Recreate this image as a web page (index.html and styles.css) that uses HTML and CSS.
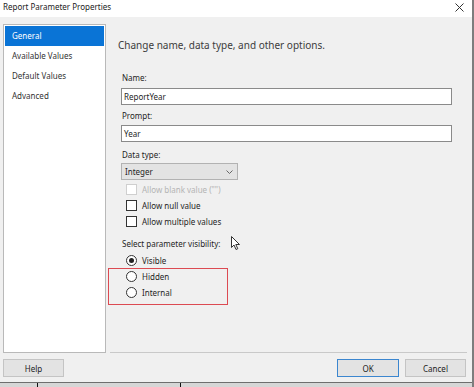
FILE: index.html
```html
<!DOCTYPE html>
<html>
<head>
  <title>Report Parameter Properties</title>
  <link rel="stylesheet" href="styles.css">
</head>
<body>
  <div class="window">
    <div class="titlebar">
      <span class="title">Report Parameter Properties</span>
      <svg class="close" width="9" height="9" viewBox="0 0 9 9">
        <path d="M0.5 0.5 L8.5 8.5 M8.5 0.5 L0.5 8.5" stroke="#333" stroke-width="1"/>
      </svg>
    </div>

    <div class="main">
      <ul class="nav">
        <li class="nav-item active">General</li>
        <li class="nav-item">Available Values</li>
        <li class="nav-item">Default Values</li>
        <li class="nav-item">Advanced</li>
      </ul>

      <div class="panel">
        <h2 class="heading">Change name, data type, and other options.</h2>

        <label class="field-label label-name">Name:</label>
        <div class="textbox tb-name">ReportYear</div>

        <label class="field-label label-prompt">Prompt:</label>
        <div class="textbox tb-prompt">Year</div>

        <label class="field-label label-type">Data type:</label>
        <div class="select">
          <span>Integer</span>
          <svg width="7" height="4" viewBox="0 0 7 4">
            <path d="M0.5 0.5 L3.5 3.5 L6.5 0.5" fill="none" stroke="#666" stroke-width="1"/>
          </svg>
        </div>

        <div class="checks">
          <div class="check disabled"><span class="box"></span>Allow blank value ("")</div>
          <div class="check"><span class="box"></span>Allow null value</div>
          <div class="check"><span class="box"></span>Allow multiple values</div>
        </div>

        <label class="field-label label-vis">Select parameter visibility:</label>
        <div class="radios">
          <div class="radio"><span class="dot checked"></span>Visible</div>
          <div class="radio"><span class="dot"></span>Hidden</div>
          <div class="radio"><span class="dot"></span>Internal</div>
        </div>

        <!-- annotation drawn over the dialog -->
        <div class="highlight"></div>
        <svg class="cursor" width="10" height="15" viewBox="0 0 10 15">
          <path d="M0.5 0.5 L0.5 11.5 L3 9 L5 13.5 L6.8 12.7 L4.8 8.5 L8.5 8.5 Z" fill="#fff" stroke="#333" stroke-width="1" stroke-linejoin="round"/>
        </svg>
      </div>
    </div>

    <div class="footer">
      <button class="btn">Help</button>
      <div class="footer-right">
        <button class="btn btn-default">OK</button>
        <button class="btn">Cancel</button>
      </div>
    </div>

    <div class="taskbar">
      <span class="tick tick-1"></span>
      <span class="tick tick-2"></span>
    </div>
  </div>
</body>
</html>
```

FILE: styles.css
```css
body {
  margin: 0;
  font-family: "Noto Sans", "Liberation Sans", sans-serif;
  font-size: 8px;
  color: #1e1e1e;
  background: #f0f0f0;
}
.window {
  width: 474px;
  height: 387px;
  overflow: hidden;
  display: flex;
  flex-direction: column;
  background: #f0f0f0;
  box-sizing: border-box;
  border-right: 2px solid #7d7d7d;
}
.titlebar {
  height: 17px;
  background: #fff;
  display: flex;
  justify-content: space-between;
  padding: 0 8px 0 3px;
  box-sizing: border-box;
}
.title {
  line-height: 14px;
  color: #222;
}
.close {
  margin-top: 3px;
}
.main {
  display: flex;
  gap: 4px;
  padding: 7px 5px 0 3px;
  height: 329px;
}
.nav {
  list-style: none;
  margin: 0;
  padding: 1px;
  width: 103px;
  height: 329px;
  box-sizing: border-box;
  background: #fff;
  border: 1px solid #b9b9b9;
}
.nav-item {
  height: 20px;
  line-height: 20px;
  padding-left: 7px;
  color: #333;
}
.nav-item.active {
  background: #0a74d6;
  color: #fff;
}
.panel {
  position: relative;
  flex: 1;
  height: 328px;
  border-bottom: 1px solid #c9c9c9;
  display: flex;
  flex-direction: column;
  align-items: flex-start;
  padding-left: 8px;
}
.heading {
  margin: 14px 0 0;
  font-size: 10px;
  font-weight: normal;
  line-height: 14px;
  color: #3c3c3c;
}
.field-label {
  display: block;
  line-height: 12px;
  margin-left: 4px;
}
.label-name { margin-top: 20px; }
.label-prompt { margin-top: 5px; }
.label-type { margin-top: 7px; }
.label-vis { margin-top: 9px; }
.textbox {
  margin: 4px 0 0 3px;
  width: 331px;
  height: 17px;
  box-sizing: border-box;
  border: 1px solid #8a8a8a;
  background: #fff;
  padding-left: 2px;
  line-height: 15px;
}
.tb-prompt { margin-top: 3px; }
.select {
  margin: 2px 0 0 3px;
  width: 117px;
  height: 17px;
  box-sizing: border-box;
  border: 1px solid #b2b2b2;
  background: #e3e3e3;
  display: flex;
  justify-content: space-between;
  align-items: center;
  padding: 0 4px 0 3px;
}
.checks, .radios {
  display: flex;
  flex-direction: column;
  margin-left: 8px;
}
.checks { margin-top: 1px; }
.radios { margin-top: 2px; }
.check, .radio {
  height: 16px;
  display: flex;
  align-items: center;
  gap: 5px;
}
.box {
  width: 9px;
  height: 9px;
  border: 1px solid #333;
  background: #fff;
}
.check.disabled {
  color: #b4b4b4;
}
.check.disabled .box {
  border-color: #cfcfcf;
}
.dot {
  width: 9px;
  height: 9px;
  border: 1px solid #333;
  border-radius: 50%;
  background: #fff;
  position: relative;
}
.dot.checked::after {
  content: "";
  position: absolute;
  left: 2px;
  top: 2px;
  width: 5px;
  height: 5px;
  border-radius: 50%;
  background: #222;
}
.highlight {
  position: absolute;
  left: -2px;
  top: 244px;
  width: 120px;
  height: 37px;
  box-sizing: border-box;
  border: 1.5px solid #dc4a52;
}
.cursor {
  position: absolute;
  left: 121px;
  top: 212px;
}
.footer {
  display: flex;
  justify-content: space-between;
  padding: 6px 6px 0 3px;
  height: 23px;
}
.footer-right {
  display: flex;
  gap: 6px;
}
.btn {
  width: 61px;
  height: 18px;
  box-sizing: border-box;
  border: 1px solid #c4c4c4;
  background: #e3e3e3;
  font-family: inherit;
  font-size: 8px;
  color: #222;
  padding: 0;
}
.btn-default {
  width: 62px;
  border: 1.5px solid #3b86cf;
}
.taskbar {
  position: relative;
  margin-top: auto;
  height: 4px;
  border-top: 1px solid #6e6e6e;
  background: #d6d6d6;
}
.tick {
  position: absolute;
  top: 0;
  width: 1px;
  height: 4px;
  background: #111;
}
.tick-1 { left: 37px; }
.tick-2 { left: 180px; }
```
